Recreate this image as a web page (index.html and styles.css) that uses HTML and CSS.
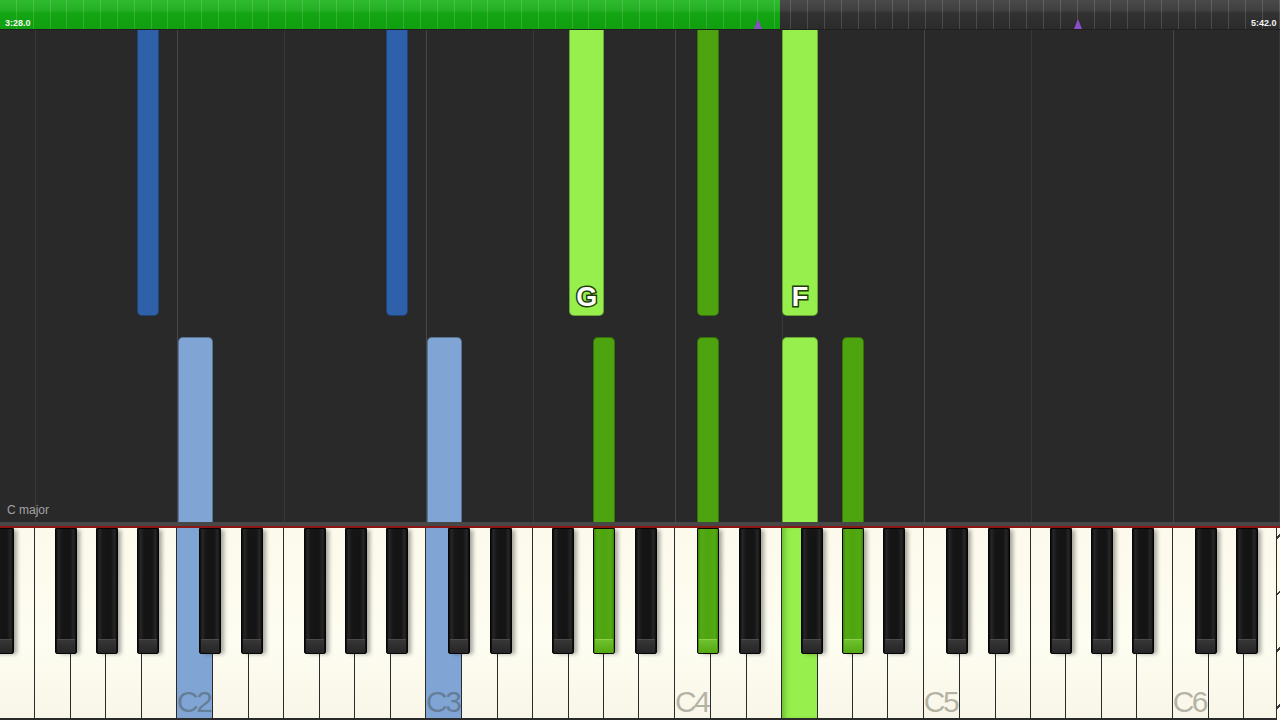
FILE: index.html
```html
<!DOCTYPE html>
<html lang="en">
<head>
<meta charset="utf-8">
<title>Piano roll</title>
<link rel="stylesheet" href="styles.css">
</head>
<body>
<div class="app">
  <header class="timeline">
    <div class="progress" style="width:780px"></div>
    <div class="ticks"></div>
    <span class="marker" style="left:753.5px"></span>
    <span class="marker" style="left:1073.5px"></span>
    <span class="time time-start">3:28.0</span>
    <span class="time time-end">5:42.0</span>
  </header>

  <main class="roll">
    <!-- upcoming notes -->
    <div class="note lh-black" style="left:136.7px;top:-10px;height:296px"></div>
    <div class="note lh-black" style="left:385.6px;top:-10px;height:296px"></div>
    <div class="note rh-white" style="left:568.9px;top:-10px;height:296px"><span class="name">G</span></div>
    <div class="note rh-black" style="left:697.1px;top:-10px;height:296px"></div>
    <div class="note rh-white" style="left:782.2px;top:-10px;height:296px"><span class="name">F</span></div>

    <!-- sounding notes -->
    <div class="note lh-white held" style="left:177.8px;top:307px;height:190px"></div>
    <div class="note lh-white held" style="left:426.7px;top:307px;height:190px"></div>
    <div class="note rh-black held" style="left:593.4px;top:307px;height:190px"></div>
    <div class="note rh-black held" style="left:697.1px;top:307px;height:190px"></div>
    <div class="note rh-white held" style="left:782.2px;top:307px;height:190px"></div>
    <div class="note rh-black held" style="left:842.3px;top:307px;height:190px"></div>

    <span class="key-sig">C major</span>
  </main>

  <div class="rail"></div>

  <section class="keyboard">
    <div class="white"></div>
    <div class="white"></div>
    <div class="white"></div>
    <div class="white"></div>
    <div class="white"></div>
    <div class="white lit-blue"><span class="label">C2</span></div>
    <div class="white"></div>
    <div class="white"></div>
    <div class="white"></div>
    <div class="white"></div>
    <div class="white"></div>
    <div class="white"></div>
    <div class="white lit-blue"><span class="label">C3</span></div>
    <div class="white"></div>
    <div class="white"></div>
    <div class="white"></div>
    <div class="white"></div>
    <div class="white"></div>
    <div class="white"></div>
    <div class="white"><span class="label">C4</span></div>
    <div class="white"></div>
    <div class="white"></div>
    <div class="white lit-green"></div>
    <div class="white"></div>
    <div class="white"></div>
    <div class="white"></div>
    <div class="white"><span class="label">C5</span></div>
    <div class="white"></div>
    <div class="white"></div>
    <div class="white"></div>
    <div class="white"></div>
    <div class="white"></div>
    <div class="white"></div>
    <div class="white"><span class="label">C6</span></div>
    <div class="white"></div>
    <div class="white"></div>

    <div class="black" style="left:-8px"></div>
    <div class="black" style="left:54.6px"></div>
    <div class="black" style="left:95.7px"></div>
    <div class="black" style="left:136.7px"></div>
    <div class="black" style="left:199.3px"></div>
    <div class="black" style="left:240.9px"></div>
    <div class="black" style="left:303.5px"></div>
    <div class="black" style="left:344.6px"></div>
    <div class="black" style="left:385.6px"></div>
    <div class="black" style="left:448.2px"></div>
    <div class="black" style="left:489.8px"></div>
    <div class="black" style="left:552.4px"></div>
    <div class="black lit-green" style="left:593.4px"></div>
    <div class="black" style="left:634.5px"></div>
    <div class="black lit-green" style="left:697.1px"></div>
    <div class="black" style="left:738.7px"></div>
    <div class="black" style="left:801.3px"></div>
    <div class="black lit-green" style="left:842.3px"></div>
    <div class="black" style="left:883.4px"></div>
    <div class="black" style="left:946px"></div>
    <div class="black" style="left:987.6px"></div>
    <div class="black" style="left:1050.2px"></div>
    <div class="black" style="left:1091.2px"></div>
    <div class="black" style="left:1132.3px"></div>
    <div class="black" style="left:1194.9px"></div>
    <div class="black" style="left:1236.4px"></div>

    <div class="edge"></div>
  </section>
</div>
</body>
</html>
```

FILE: styles.css
```css
* {
  box-sizing: border-box;
  margin: 0;
  padding: 0;
}

html,
body {
  width: 1280px;
  height: 720px;
  overflow: hidden;
  background: #292929;
}

body {
  font-family: "Liberation Sans", Arial, sans-serif;
}

.app {
  display: flex;
  flex-direction: column;
  width: 1280px;
  height: 720px;
}

/* ---------- song position bar ---------- */
.timeline {
  position: relative;
  flex: none;
  height: 30px;
  overflow: hidden;
  background: linear-gradient(#4a4a4a 0, #404040 35%, #323232 45%, #2b2b2b 100%);
  border-bottom: 1px solid #1f1f1f;
}

.progress {
  height: 100%;
  background: linear-gradient(#30ba30 0, #24b024 35%, #14a514 45%, #0f9f0f 100%);
}

.ticks {
  position: absolute;
  inset: 0;
  background: repeating-linear-gradient(90deg,
      transparent 0 15.84px,
      rgba(255, 255, 255, 0.14) 15.84px 16.84px);
}

.marker {
  position: absolute;
  bottom: 0;
  width: 0;
  height: 0;
  border-left: 4.5px solid transparent;
  border-right: 4.5px solid transparent;
  border-bottom: 10px solid #8a4ec8;
}

.time {
  position: absolute;
  bottom: 1px;
  font-size: 9px;
  font-weight: bold;
  color: #f4f4f4;
  line-height: 1;
}

.time-start {
  left: 5px;
}

.time-end {
  left: 1251px;
}

/* ---------- falling notes ---------- */
.roll {
  position: relative;
  flex: none;
  height: 492px;
  overflow: hidden;
  background-color: #292929;
  background-image: repeating-linear-gradient(90deg,
      transparent 0 35px,
      #383838 35px 36px,
      transparent 36px 177px,
      #474747 177px 178px,
      transparent 178px 248.89px);
}

.note {
  position: absolute;
  display: flex;
  flex-direction: column;
  justify-content: flex-end;
  align-items: center;
  border-radius: 5px;
  border: 1px solid rgba(0, 0, 0, 0.3);
}

.note.held {
  border-bottom: 0;
  border-radius: 5px 5px 0 0;
}

.lh-black {
  width: 22px;
  background: #2f60aa;
}

.lh-white {
  width: 35.5px;
  background: #80a5d5;
}

.rh-black {
  width: 22px;
  background: #4ea40f;
}

.rh-white {
  width: 35.5px;
  background: #96ef4c;
}

.name {
  margin-bottom: 4px;
  font-size: 27px;
  font-weight: bold;
  line-height: 1;
  color: #ffffff;
  -webkit-text-stroke: 3px #1f3d0a;
  paint-order: stroke fill;
}

.key-sig {
  position: absolute;
  left: 7px;
  bottom: 5px;
  font-size: 12px;
  color: #a3a3a3;
}

/* ---------- keyboard ---------- */
.rail {
  flex: none;
  height: 6px;
  background: linear-gradient(#474747 0 4px, #8c1515 4px 6px);
}

.keyboard {
  position: relative;
  flex: 1;
  display: flex;
  overflow: hidden;
  background: #fdfcef;
}

.white {
  flex: 1 1 0;
  display: flex;
  align-items: flex-end;
  justify-content: center;
  background: linear-gradient(#fbfaec, #fefdf1 60%, #f7f6e8);
  border-right: 1.5px solid #2b2b2b;
  border-bottom: 2px solid #2a2a2a;
}

.white.lit-blue {
  background: #80a5d5;
}

.white.lit-green {
  background: #96ef4c;
  box-shadow: inset 6px 0 6px -4px rgba(40, 90, 10, 0.45);
}

.label {
  margin-bottom: 1px;
  font-size: 30px;
  letter-spacing: -2.5px;
  padding-right: 2px;
  line-height: 1;
  color: rgba(50, 50, 30, 0.36);
}

.black {
  position: absolute;
  top: 0;
  width: 22px;
  height: 126px;
  border: 1px solid #050505;
  border-radius: 0 0 2px 2px;
  background: linear-gradient(90deg, #0c0c0c 0, #262626 12%, #151515 30%, #141414 70%, #262626 88%, #0c0c0c 100%);
  box-shadow: 4px 1px 4px -1px rgba(0, 0, 0, 0.35);
}

.black::after {
  content: "";
  position: absolute;
  left: 1px;
  right: 1px;
  bottom: 0;
  height: 13px;
  border-top: 1px solid #4a4a4a;
  background: linear-gradient(#373737, #252525);
}

.black.lit-green {
  background: linear-gradient(90deg, #3c8709 0, #54aa14 14%, #4ea40f 50%, #54aa14 86%, #3c8709 100%);
}

.black.lit-green::after {
  border-top-color: #8ad24a;
  background: linear-gradient(#6ec22c, #55a815);
}

.edge {
  position: absolute;
  top: 0;
  right: 0;
  bottom: 0;
  width: 4px;
  background: repeating-linear-gradient(135deg, #fdfcef 0 6px, #3a3a3a 6px 8px, #fdfcef 8px 40px);
  border-left: 1px solid #2b2b2b;
}
```
